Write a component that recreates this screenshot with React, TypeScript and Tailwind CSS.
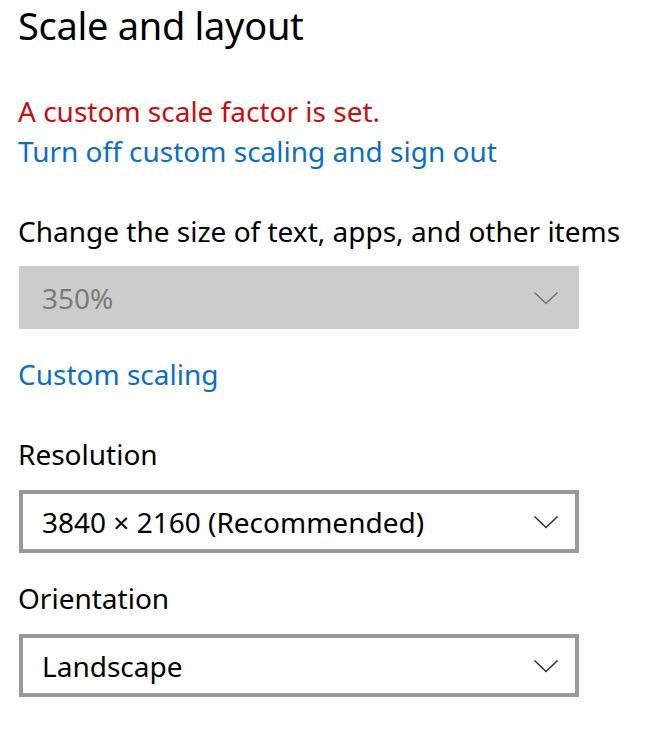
import React from "react";

function Chevron({ color }: { color: string }) {
  return (
    <svg width="26" height="14" viewBox="0 0 26 14" fill="none" className="shrink-0">
      <polyline points="1.5,1.5 13,12.5 24.5,1.5" stroke={color} strokeWidth="1.6" fill="none" />
    </svg>
  );
}

function Select({ value, disabled }: { value: string; disabled?: boolean }) {
  return (
    <div
      className={
        disabled
          ? "ml-px flex h-[63px] w-[560px] items-center justify-between border-4 border-[#cccccc] bg-[#cccccc] pl-[19px] pr-4"
          : "ml-px flex h-[63px] w-[560px] items-center justify-between border-4 border-[#999999] bg-white pl-[19px] pr-4"
      }
    >
      <span className={disabled ? "text-[28px] leading-[40px] text-[#7a7a7a]" : "text-[28px] leading-[40px] text-black"}>
        {value}
      </span>
      <Chevron color={disabled ? "#777777" : "#333333"} />
    </div>
  );
}

export default function App() {
  return (
    <div className="h-[740px] w-[654px] bg-white pl-[18px] font-['Noto_Sans',sans-serif] text-black">
      <h1 className="pt-px text-[38px] font-normal leading-[48px] tracking-[-0.3px]">Scale and layout</h1>
      <p className="mt-[42px] text-[28px] leading-[40px] text-[#c50f0f]">A custom scale factor is set.</p>
      <a className="block text-[28px] leading-[40px] text-[#0b6ec5]">Turn off custom scaling and sign out</a>
      <p className="mt-10 text-[28px] leading-[40px]">Change the size of text, apps, and other items</p>
      <div className="mt-[15px]">
        <Select value="350%" disabled />
      </div>
      <a className="mt-[25px] block text-[28px] leading-[40px] text-[#0b6ec5]">Custom scaling</a>
      <p className="mt-10 text-[28px] leading-[40px]">Resolution</p>
      <div className="mt-4">
        <Select value="3840 × 2160 (Recommended)" />
      </div>
      <p className="mt-[25px] text-[28px] leading-[40px]">Orientation</p>
      <div className="mt-4">
        <Select value="Landscape" />
      </div>
    </div>
  );
}
